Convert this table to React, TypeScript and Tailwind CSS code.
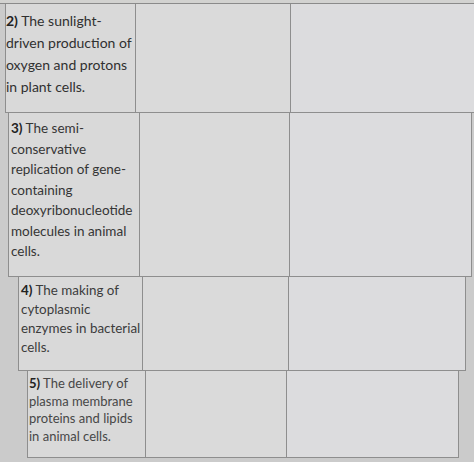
const rows = [
  {
    num: "2)",
    lines: ["The sunlight-", "driven production of", "oxygen and protons", "in plant cells."],
    row: "h-[109px] ml-[5px] mr-[-4px]",
    type: "text-[14px] leading-[22px] pt-[6px] text-[#303030]",
    col1: "w-[131px]",
    col2: "w-[155px]",
  },
  {
    num: "3)",
    lines: [
      "The semi-",
      "conservative",
      "replication of gene-",
      "containing",
      "deoxyribonucleotide",
      "molecules in animal",
      "cells.",
    ],
    row: "h-[164px] ml-[8px] mr-[2px]",
    type: "text-[13.5px] leading-[20.5px] pt-[5px] text-[#353535]",
    col1: "w-[132px] pl-[2px]",
    col2: "w-[150px]",
  },
  {
    num: "4)",
    lines: ["The making of", "cytoplasmic", "enzymes in bacterial", "cells."],
    row: "h-[94px] ml-[18px] mr-[8px]",
    type: "text-[13.4px] leading-[19px] pt-[4px] text-[#3c3c3c]",
    col1: "w-[125px] pl-[2px]",
    col2: "w-[146px]",
  },
  {
    num: "5)",
    lines: ["The delivery of", "plasma membrane", "proteins and lipids", "in animal cells."],
    row: "h-[87px] ml-[27px] mr-[15px]",
    type: "text-[13px] leading-[17.5px] pt-[4px] text-[#474747]",
    col1: "w-[119px] pl-[1px]",
    col2: "w-[141px]",
  },
];

export default function App() {
  return (
    <div
      className="h-[462px] w-[474px] overflow-hidden bg-[#cbcbcb]"
      style={{ fontFamily: "Lato, 'Open Sans', sans-serif" }}
    >
      <div className="h-[3px] bg-[#d2d2d0]" />
      <div className="border-t border-[#8a8a8a]">
        {rows.map((r) => (
          <div key={r.num} className={`flex border-b border-[#8e8e8e] bg-[#d9d9d9] ${r.row}`}>
            <div className={`shrink-0 border-x border-[#8e8e8e] ${r.col1} ${r.type}`}>
              <div className="whitespace-nowrap">
                <span className="font-bold text-[#222]">{r.num}</span> {r.lines[0]}
              </div>
              {r.lines.slice(1).map((l) => (
                <div key={l} className="whitespace-nowrap">
                  {l}
                </div>
              ))}
            </div>
            <div className={`shrink-0 border-r border-[#8e8e8e] bg-[#dadada] ${r.col2}`} />
            <div className="flex-1 border-r border-[#8e8e8e] bg-[#dcdcde]" />
          </div>
        ))}
      </div>
    </div>
  );
}
